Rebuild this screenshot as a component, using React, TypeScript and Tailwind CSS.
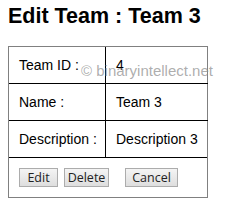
export default function App() {
  const rows = [
    { label: "Team ID :", value: "4" },
    { label: "Name :", value: "Team 3" },
    { label: "Description :", value: "Description 3" },
  ];

  return (
    <div className="relative w-[243px] h-[205px] bg-white text-black px-2 pt-1 font-['Liberation_Sans',Arial,sans-serif]">
      {/* heading */}
      <h2 className="text-[21.5px] leading-[24px] font-bold">Edit Team : Team 3</h2>

      {/* details view */}
      <div className="mt-[18px] w-[200px] border border-[#808080] text-[14px] leading-[16px]">
        <div className="grid grid-cols-[97px_1fr]">
          {rows.map((r, i) => (
            <div key={r.label} className="contents">
              <div className={`p-[10px] border-r border-black whitespace-nowrap ${i > 0 ? "border-t" : ""}`}>
                {r.label}
              </div>
              <div className={`p-[10px] whitespace-nowrap border-black ${i > 0 ? "border-t" : ""}`}>
                {r.value}
              </div>
            </div>
          ))}
        </div>

        {/* buttons */}
        <div className="flex items-center border-t border-black p-[10px] text-[12.5px] font-['Open_Sans',sans-serif] text-[#222]">
          <button className="w-[39px] h-[19px] leading-[17px] border border-[#acacac] bg-gradient-to-b from-[#f4f4f4] to-[#dedede] text-center">
            Edit
          </button>
          <button className="ml-[6px] w-[45px] h-[19px] leading-[17px] border border-[#acacac] bg-gradient-to-b from-[#f4f4f4] to-[#dedede] text-center">
            Delete
          </button>
          <button className="ml-[16px] w-[53px] h-[19px] leading-[17px] border border-[#acacac] bg-gradient-to-b from-[#f4f4f4] to-[#dedede] text-center">
            Cancel
          </button>
        </div>
      </div>

      {/* watermark */}
      <div className="absolute left-[81px] top-[62px] text-[15px] leading-[17px] text-[#8a8a8a]/70 whitespace-nowrap pointer-events-none">
        © binaryintellect.net
      </div>
    </div>
  );
}
